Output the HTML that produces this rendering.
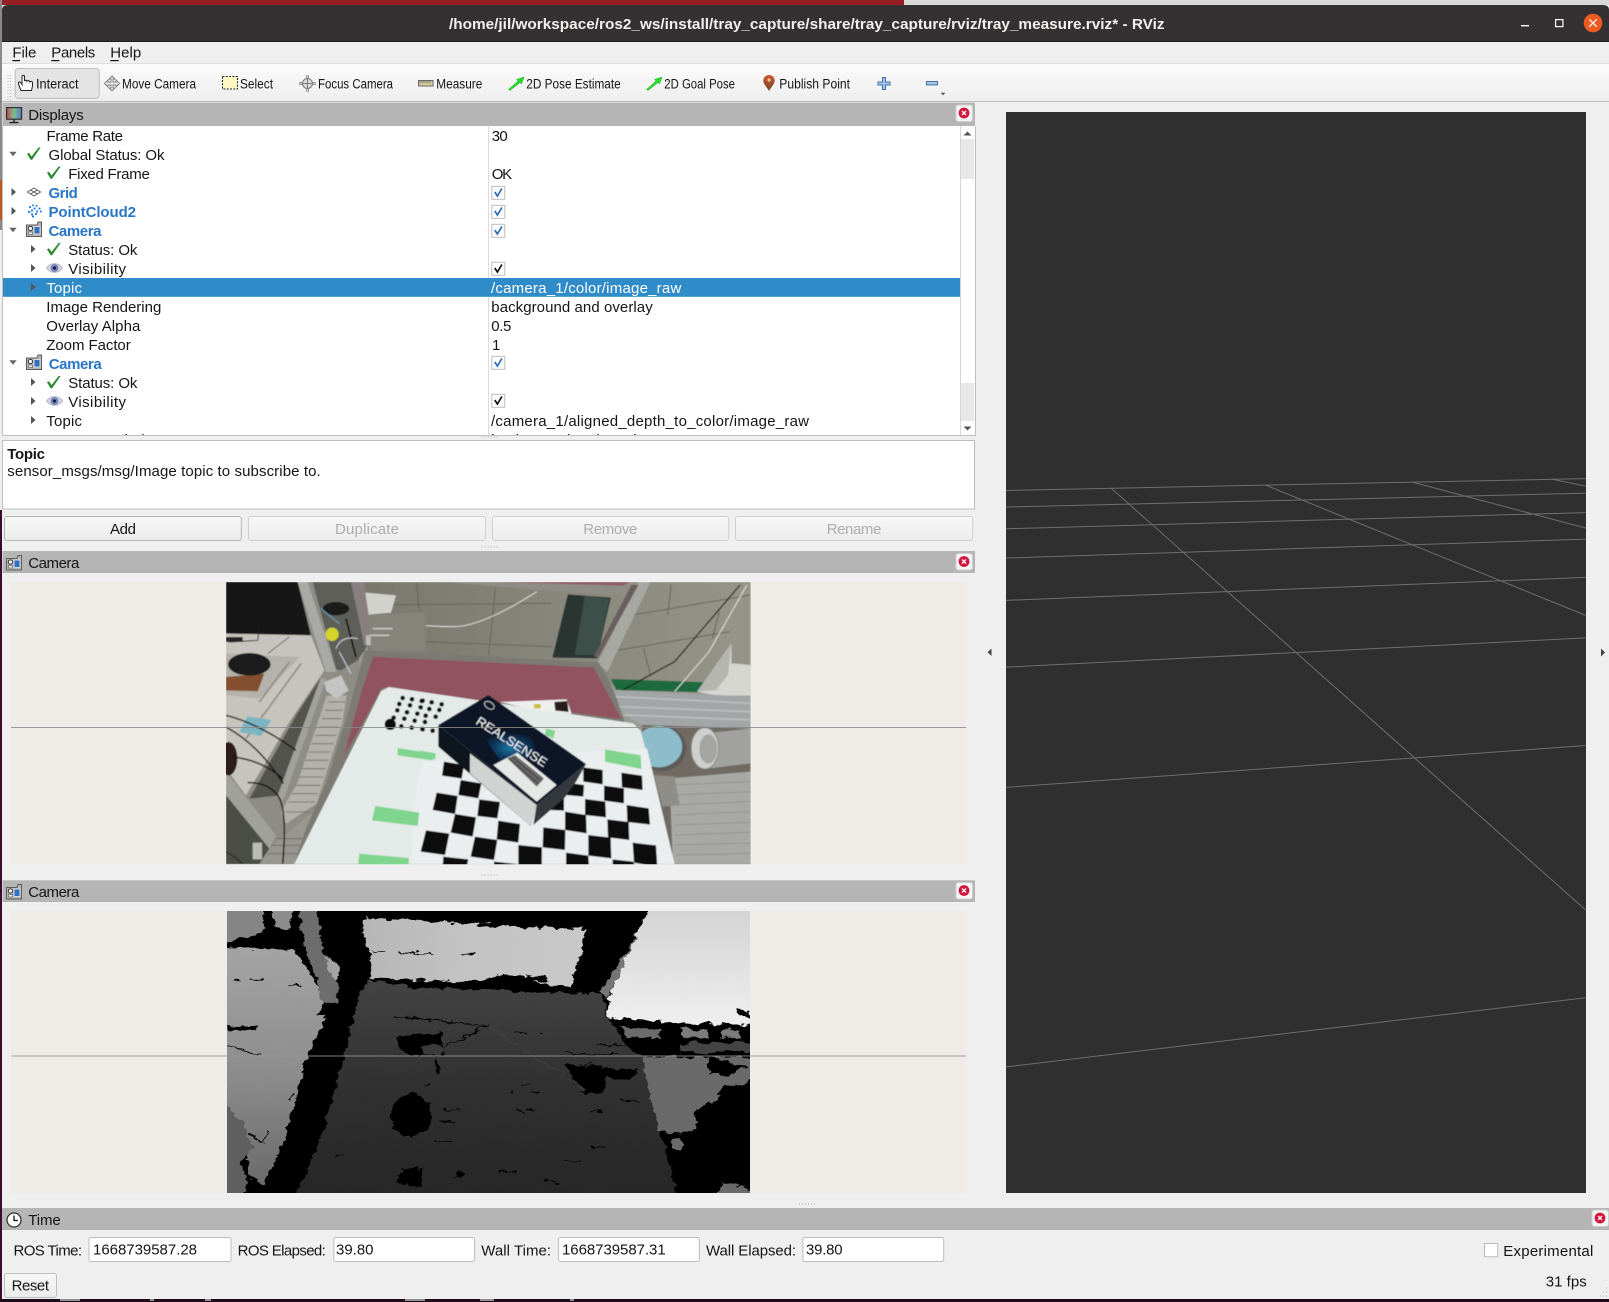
<!DOCTYPE html>
<html lang="en"><head><meta charset="utf-8"><title>RViz</title>
<style>
html,body{margin:0;padding:0;background:#efefef;width:1609px;height:1302px;overflow:hidden}
svg{display:block}
text{font-family:"Liberation Sans",sans-serif;font-size:15px;fill:#151515;white-space:pre}
.tb{font-size:13.5px}
.b{font-weight:bold;fill:#2a76c6}
.w{fill:#fff}
.d{fill:#adadad}
</style></head><body>
<svg xmlns="http://www.w3.org/2000/svg" width="1609" height="1302" viewBox="0 0 1609 1302">
<defs>
<linearGradient id="tbg" x1="0" y1="0" x2="0" y2="1"><stop offset="0" stop-color="#fbfbfb"/><stop offset="1" stop-color="#eeeeee"/></linearGradient>
<linearGradient id="btn" x1="0" y1="0" x2="0" y2="1"><stop offset="0" stop-color="#f8f8f8"/><stop offset="1" stop-color="#ebebeb"/></linearGradient>
<linearGradient id="mon" x1="0" y1="0" x2="1" y2="0"><stop offset="0" stop-color="#c24a5a"/><stop offset=".5" stop-color="#7cc08a"/><stop offset="1" stop-color="#5a78c8"/></linearGradient>
<linearGradient id="pin" x1="0" y1="0" x2="0" y2="1"><stop offset="0" stop-color="#d0562a"/><stop offset="1" stop-color="#6e4a2a"/></linearGradient>
<linearGradient id="dk" x1="0" y1="0" x2="0" y2="1"><stop offset="0" stop-color="#434343"/><stop offset=".5" stop-color="#303030"/><stop offset="1" stop-color="#262626"/></linearGradient>
<linearGradient id="lg" x1="0" y1="0" x2="0" y2="1"><stop offset="0" stop-color="#a4a4a4"/><stop offset=".5" stop-color="#8e8e8e"/><stop offset="1" stop-color="#6a6a6a"/></linearGradient>
<linearGradient id="tp" x1="0" y1="0" x2="1" y2="0"><stop offset="0" stop-color="#b6b6b6"/><stop offset=".5" stop-color="#c4c4c4"/><stop offset="1" stop-color="#c8c8c8"/></linearGradient>
<linearGradient id="br" x1="0" y1="0" x2="0" y2="1"><stop offset="0" stop-color="#d2d2d2"/><stop offset="1" stop-color="#efefef"/></linearGradient>
<linearGradient id="wall" x1="0" y1="0" x2="1" y2="0"><stop offset="0" stop-color="#79786d"/><stop offset="1" stop-color="#96958a"/></linearGradient>
<radialGradient id="bx" cx=".5" cy=".5" r=".5"><stop offset="0" stop-color="#1a76a6"/><stop offset=".5" stop-color="#103f63"/><stop offset="1" stop-color="#0d1628"/></radialGradient>
<clipPath id="c1"><rect x="226" y="582" width="524.6" height="282.3"/></clipPath>
<clipPath id="c2"><rect x="227" y="911" width="523" height="282"/></clipPath>
<clipPath id="tree"><rect x="3" y="126" width="957" height="309"/></clipPath>
<clipPath id="vw"><rect x="1006" y="112" width="580" height="1081"/></clipPath>
<filter id="soft" x="0" y="0" width="1" height="1"><feGaussianBlur stdDeviation=".55"/></filter>
<filter id="jag" filterUnits="userSpaceOnUse" x="190" y="880" width="600" height="340" color-interpolation-filters="sRGB"><feTurbulence type="fractalNoise" baseFrequency=".09 .16" numOctaves="3" seed="4" result="n"/><feDisplacementMap in="SourceGraphic" in2="n" scale="9" xChannelSelector="R" yChannelSelector="G"/></filter>
<g id="x"><rect x="-8" y="-8" width="16.5" height="16.5" rx="2.5" fill="#f5f5f5" stroke="#cfcfcf"/><circle r="5.4" fill="#d2163c"/><path d="M-2 -2L2 2M2 -2L-2 2" stroke="#fff" stroke-width="1.3"/></g>
<g id="cam"><path d="M.5 3.5H11L12 .5H15.5V15H.5Z" fill="#b5b5b2" stroke="#5c5c5a"/><rect x="8" y="5" width="6" height="7.5" fill="#2f6fc4" stroke="#d8d8d8"/><circle cx="4.4" cy="7" r="2.1" fill="#fff" stroke="#333"/><rect x="2.5" y="10.5" width="4" height="2.5" fill="#eee" stroke="#555" stroke-width=".6"/></g>
<g id="chk"><path d="M0 6.2L2 5.2L4.6 9L11.6 0L13.6 0L5.1 12.2L3.6 12.2Z" fill="#2a8a2e"/></g>
<g id="eye"><path d="M0 5C4 -.8 12 -.8 16 5C12 10.8 4 10.8 0 5Z" fill="#d6d6e2" stroke="#a9a9b8" stroke-width=".7"/><circle cx="8" cy="5" r="3.9" fill="#6f7fb8"/><circle cx="8" cy="5" r="1.5" fill="#10143a"/></g>
<path id="ar" d="M0 -4L4.5 0L0 4Z" fill="#555"/>
<path id="ad" d="M-3.7 -2.2H3.7L0 2.2Z" fill="#666"/>
</defs>

<rect width="1609" height="1302" fill="#efefef"/>
<!-- desktop behind -->
<rect x="0" y="0" width="904" height="5" fill="#951f25"/>
<rect x="904" y="0" width="705" height="5" fill="#d8d8d8"/>
<rect x="0" y="0" width="2" height="230" fill="#8a8a8a"/>
<rect x="0" y="180" width="2" height="40" fill="#bd5a20"/>
<rect x="0" y="510" width="2" height="792" fill="#3c0c2c"/>
<rect x="0" y="1299" width="1609" height="3" fill="#1e0a1a"/>
<path d="M60 1300h20M150 1300h4M205 1300h6M405 1300h20M480 1300h14M570 1300h4" stroke="#bbb" stroke-width="1.6"/>
<!-- titlebar -->
<path d="M2 42V10Q2 5 8 5H1603Q1609 5 1609 10V42Z" fill="#333131"/>
<rect x="2" y="41" width="1607" height="1" fill="#1a1a1a"/>
<text x="449" y="29" textLength="715.5" lengthAdjust="spacingAndGlyphs" font-weight="bold" style="fill:#f2f0ee">/home/jil/workspace/ros2_ws/install/tray_capture/share/tray_capture/rviz/tray_measure.rviz* - RViz</text>
<rect x="1521" y="25" width="8" height="1.4" fill="#fff"/>
<rect x="1555.6" y="19.6" width="7.3" height="7" fill="none" stroke="#fff" stroke-width="1.2"/>
<circle cx="1593" cy="23" r="9.3" fill="#ee5a22"/>
<path d="M1589.3 19.3L1596.7 26.7M1596.7 19.3L1589.3 26.7" stroke="#fff" stroke-width="1.3"/>
<!-- menu -->
<rect x="2" y="42" width="1607" height="21.5" fill="#efefef"/>
<rect x="2" y="63.3" width="1607" height="1" fill="#d6d6d6"/>
<text x="12.4" y="57.3" textLength="24">File</text><rect x="12.4" y="60" width="7.6" height="1.2" fill="#111"/>
<text x="51.3" y="57.3" textLength="44">Panels</text><rect x="51.3" y="60" width="8" height="1.2" fill="#111"/>
<text x="110.2" y="57.3" textLength="31">Help</text><rect x="110.2" y="60" width="8.6" height="1.2" fill="#111"/>
<!-- toolbar -->
<rect x="2" y="64" width="1607" height="37" fill="url(#tbg)"/>
<rect x="2" y="101" width="1607" height="1" fill="#bdbdbd"/>
<path d="M8 76v25M10.5 76v25" stroke="#bbb" stroke-dasharray="1 2" stroke-width="1" transform="translate(0,-1)"/>
<rect x="15.2" y="68.4" width="84" height="30" rx="3" fill="#e4e4e4" stroke="#bdbdbd"/>
<path d="M21 90.5C20 88 18.5 85 18.5 83C18.5 81.5 20 81.5 21 83L22 84.5V76.5C22 75 24.5 75 24.5 76.5V81C25 80 27 80 27 81.2C27.5 80.4 29.5 80.4 29.5 81.8C30.3 81 32.5 81.2 32.5 82.8V86L31.5 90.5Z" fill="#fff" stroke="#222" stroke-width="1"/>
<text class="tb" x="36" y="88.3" textLength="42.5" lengthAdjust="spacingAndGlyphs">Interact</text>
<path d="M112 76l3 3h-2v3h3v-2l3.5 3.5-3.5 3.5v-2h-3v3h2l-3 3-3-3h2v-3h-3v2l-3.5-3.5 3.5-3.5v2h3v-3h-2z" fill="#e9e9e9" stroke="#7b7b7b" stroke-width=".9"/>
<text class="tb" x="122" y="88.3" textLength="74" lengthAdjust="spacingAndGlyphs">Move Camera</text>
<rect x="222.5" y="76.5" width="15" height="12.5" fill="#fdf8c2" stroke="#222" stroke-dasharray="2 1.3"/>
<text class="tb" x="240" y="88.3" textLength="33" lengthAdjust="spacingAndGlyphs">Select</text>
<g fill="none" stroke="#7b7b7b" stroke-width="1"><path d="M307.5 75v17M299 83.5h17" stroke-width="2.4"/><path d="M307.5 75v17M299 83.5h17" stroke="#e2e2e2" stroke-width=".8"/><circle cx="307.5" cy="83.5" r="5" fill="#ddd"/><path d="M307.5 79v9M303 83.5h9" /></g>
<text class="tb" x="318" y="88.3" textLength="75" lengthAdjust="spacingAndGlyphs">Focus Camera</text>
<rect x="418.5" y="80.5" width="14.5" height="5.5" fill="#d8cfa0" stroke="#666"/><path d="M420 81v2.2M422 81v2.2M424 81v2.2M426 81v2.2M428 81v2.2M430 81v2.2" stroke="#555" stroke-width=".7"/>
<text class="tb" x="436.3" y="88.3" textLength="46" lengthAdjust="spacingAndGlyphs">Measure</text>
<path d="M508.5 89.5L518 81L516.5 79.5L524 77L521.5 84L520 82.5L510 90.5Z" fill="#22e022" stroke="#148a14" stroke-width=".4"/>
<text class="tb" x="526.3" y="88.3" textLength="94.4" lengthAdjust="spacingAndGlyphs">2D Pose Estimate</text>
<path d="M646.5 89.5L656 81L654.5 79.5L662 77L659.5 84L658 82.5L648 90.5Z" fill="#22e022" stroke="#148a14" stroke-width=".4"/>
<text class="tb" x="664.3" y="88.3" textLength="70.7" lengthAdjust="spacingAndGlyphs">2D Goal Pose</text>
<path d="M769 75a5.7 5.7 0 0 1 5.7 5.7c0 3.5-3.7 6.5-5.7 10.3c-2-3.8-5.7-6.8-5.7-10.3A5.7 5.7 0 0 1 769 75z" fill="url(#pin)"/><circle cx="769" cy="80" r="1.6" fill="#f0c8a8"/>
<text class="tb" x="779.3" y="88.3" textLength="70.7" lengthAdjust="spacingAndGlyphs">Publish Point</text>
<path d="M882.5 77.5h3v4.5h4.5v3h-4.5v4.5h-3v-4.5h-4.5v-3h4.5z" fill="#a9c3e6" stroke="#3f72ae" stroke-width="1"/>
<rect x="926.5" y="81.5" width="11" height="3.4" fill="#a9c3e6" stroke="#3f72ae" stroke-width="1"/>
<path d="M940.7 92.8h4.6L943 95.4z" fill="#555"/>

<!-- Displays header -->
<rect x="2.5" y="102.6" width="972.5" height="23.4" fill="#b5b5b5"/>
<rect x="6.6" y="107.6" width="15" height="11.6" fill="url(#mon)" stroke="#2a2a2a" stroke-width="1.1"/><path d="M14 119v3M9.5 122.6h9" stroke="#222" stroke-width="1.4"/>
<text x="28.2" y="120" textLength="55.5">Displays</text>
<use href="#x" x="964" y="113"/>
<!-- tree -->
<rect x="3" y="126" width="957" height="309" fill="#fff"/>
<rect x="960" y="126" width="15" height="309" fill="#fff"/>
<rect x="960.5" y="139" width="14" height="40" fill="#e8e8e8"/>
<rect x="960.5" y="383" width="14" height="38" fill="#e8e8e8"/>
<rect x="960" y="126" width="1" height="309" fill="#d5d5d5"/>
<path d="M967.5 131.5L971.5 135.5H963.5Z" fill="#555"/><path d="M963.5 426.5H971.5L967.5 430.5Z" fill="#555"/>
<rect x="2" y="126" width="1" height="310" fill="#bfbfbf"/>
<rect x="2" y="435" width="973" height="1" fill="#bfbfbf"/>
<rect x="975" y="126" width="1" height="310" fill="#bfbfbf"/>
<rect x="488" y="126" width="1" height="309" fill="#dcdcdc"/>
<rect x="3" y="278" width="957" height="18.8" fill="#2f8cc8"/>
<g clip-path="url(#tree)"><g transform="translate(0,-.5)">
<text x="46.5" y="141.3" textLength="76.5">Frame Rate</text>
<text x="491.7" y="141.3" textLength="16">30</text>
<use href="#ad" x="13" y="154.5"/><use href="#chk" x="27" y="148"/>
<text x="48.5" y="160.3" textLength="116">Global Status: Ok</text>
<use href="#chk" x="47" y="167"/>
<text x="68.2" y="179.3" textLength="81.6">Fixed Frame</text>
<text x="491.7" y="179.3" textLength="20.5">OK</text>
<use href="#ar" x="11.5" y="192.5"/>
<path d="M27.5 192.5L34 188.5L40.5 192.5L34 196.5Z M30.5 190.5L37.5 194.5M37.5 190.5L30.5 194.5" fill="none" stroke="#555" stroke-width=".9"/>
<text class="b" x="48.5" y="198.3" textLength="29.3">Grid</text>
<use href="#ar" x="11.5" y="211.5"/>
<path d="M33 205v1.8M36.5 205.5v1.8M29 207.5h2M33.5 209h2M38.5 209h2M31 211h2M28 212.5h2.4M36 212h2M40 212h1.8M31 215h2M35 214.5h2M32 217h2" stroke="#1e7fe0" stroke-width="1.7"/>
<text class="b" x="48.5" y="217.3" textLength="87.5">PointCloud2</text>
<use href="#ad" x="13" y="230.5"/><use href="#cam" x="26" y="222"/>
<text class="b" x="48.5" y="236.3" textLength="53">Camera</text>
<use href="#ar" x="31" y="249.5"/><use href="#chk" x="47" y="243.5"/>
<text x="68.2" y="255.3" textLength="69.2">Status: Ok</text>
<use href="#ar" x="31" y="268.5"/><use href="#eye" x="46.5" y="263.5"/>
<text x="68.2" y="274.3" textLength="57.8">Visibility</text>
<use href="#ar" x="31" y="287.5"/>
<text class="w" x="46.4" y="293.3" textLength="35.6">Topic</text>
<text class="w" x="491" y="293.3" textLength="190.3">/camera_1/color/image_raw</text>
<text x="46.3" y="312.3" textLength="115">Image Rendering</text>
<text x="491.3" y="312.3" textLength="161.4">background and overlay</text>
<text x="46.3" y="331.3" textLength="94">Overlay Alpha</text>
<text x="491.3" y="331.3" textLength="20">0.5</text>
<text x="46.3" y="350.3" textLength="84.4">Zoom Factor</text>
<text x="492" y="350.3" textLength="6.5">1</text>
<use href="#ad" x="13" y="363"/><use href="#cam" x="26" y="355"/>
<text class="b" x="48.7" y="369.3" textLength="53">Camera</text>
<use href="#ar" x="31" y="382.5"/><use href="#chk" x="47" y="376.5"/>
<text x="68.2" y="388.3" textLength="69.2">Status: Ok</text>
<use href="#ar" x="31" y="401.5"/><use href="#eye" x="46.5" y="396.5"/>
<text x="68.2" y="407.3" textLength="57.8">Visibility</text>
<use href="#ar" x="31" y="420.5"/>
<text x="46.3" y="426.3" textLength="35.7">Topic</text>
<text x="491" y="426.3" textLength="318">/camera_1/aligned_depth_to_color/image_raw</text>
<text x="46.3" y="445.3" textLength="115">Image Rendering</text>
<text x="491.3" y="445.3" textLength="161.4">background and overlay</text>
<!-- check boxes -->
<g fill="#fff" stroke="#bcbcbc"><rect x="491.8" y="186.8" width="13" height="13"/><rect x="491.8" y="205.8" width="13" height="13"/><rect x="491.8" y="224.8" width="13" height="13"/><rect x="491.8" y="262.8" width="13" height="13"/><rect x="491.8" y="356.8" width="13" height="13"/><rect x="491.8" y="394.8" width="13" height="13"/></g>
<g fill="none" stroke="#2a6db5" stroke-width="1.7"><path d="M494.8 192.5l2.6 4 4.5-7.5M494.8 211.5l2.6 4 4.5-7.5M494.8 230.5l2.6 4 4.5-7.5M494.8 362.5l2.6 4 4.5-7.5"/></g>
<g fill="none" stroke="#111" stroke-width="1.7"><path d="M494.8 268.5l2.6 4 4.5-7.5M494.8 400.5l2.6 4 4.5-7.5"/></g>
</g></g>
<path d="M481.7 437h17" stroke="#aaa" stroke-dasharray="1 2"/>
<!-- description -->
<rect x="2.5" y="440.5" width="972" height="68.5" fill="#fff" stroke="#bdbdbd"/>
<text x="7.3" y="459" textLength="37.7" font-weight="bold">Topic</text>
<text x="7.3" y="476" textLength="313.4">sensor_msgs/msg/Image topic to subscribe to.</text>
<!-- buttons -->
<g fill="url(#btn)" stroke="#bdbdbd">
<rect x="4.5" y="516.5" width="236.8" height="24" rx="2.5" stroke="#b4b4b4"/>
<rect x="248.5" y="516.5" width="237" height="24" rx="2.5" stroke="#cfcfcf"/>
<rect x="492.5" y="516.5" width="236.2" height="24" rx="2.5" stroke="#cfcfcf"/>
<rect x="735.5" y="516.5" width="237.2" height="24" rx="2.5" stroke="#cfcfcf"/></g>
<text x="110" y="534" textLength="26">Add</text>
<text class="d" x="335" y="534" textLength="64">Duplicate</text>
<text class="d" x="583.3" y="534" textLength="54">Remove</text>
<text class="d" x="826.7" y="534" textLength="54.6">Rename</text>
<path d="M481.7 547h17" stroke="#aaa" stroke-dasharray="1 2"/>
<!-- Camera 1 -->
<rect x="2.5" y="551" width="972.5" height="22" fill="#b5b5b5"/>
<use href="#cam" x="6" y="555"/>
<text x="28.3" y="568" textLength="51">Camera</text>
<use href="#x" x="964" y="561.5"/>
<rect x="11" y="582" width="955" height="282.3" fill="#efece8"/>

<g clip-path="url(#c1)"><g filter="url(#soft)">
<rect x="226" y="582" width="525" height="283" fill="#9b9a92"/>
<!-- scene right/back, zoom6 coordinates -->
<g transform="translate(220,575) scale(.3444,.3333)">
<polygon points="400,21 1541,21 1541,340 1130,330 1000,260 430,225" fill="url(#wall)"/>
<path d="M570 21L590 225M800 40L780 240M430 90L960 85M590 200L965 215M1140 130L1541 60M1130 230L1480 170M1310 30L1300 120M1450 110L1430 190M1230 220L1250 300" stroke="#66655b" stroke-width="3" fill="none"/>
<polygon points="660,21 1240,21 1205,65 920,45" fill="#8e8c85"/>
<polygon points="800,21 1190,21 1170,32" fill="#8d5a68"/>
<polygon points="1010,58 1135,68 1095,250 965,248" fill="#2b3531"/>
<polygon points="1060,62 1130,72 1098,240 1030,240" fill="#3d5048"/>
<polygon points="1215,21 1250,21 1125,290 1095,265" fill="#a8a8a3"/>
<polygon points="1195,30 1215,30 1100,245 1085,245" fill="#6a5e60"/>
<path d="M510 142Q600 155 680 155T920 50" stroke="#d8d8d4" stroke-width="3" fill="none"/>
<polygon points="1135,312 1420,322 1395,352 1150,345" fill="#1e6a3c"/>
<path d="M1170 345L1320 260L1510 30" stroke="#111" stroke-width="3.5" fill="none"/>
<path d="M1320 350L1420 230L1530 30" stroke="#ddd" stroke-width="3" fill="none"/>
<polygon points="1385,350 1485,205 1485,265 1541,270 1541,362 1440,362" fill="#d6d6d1"/>
<polygon points="1385,350 1485,205 1475,300 1440,345" fill="#b6b6b0"/>
<polygon points="1145,345 1541,365 1541,460 1225,450 1170,420" fill="#a3a6a6"/>
<path d="M1150 365L1541 385M1160 395L1541 410M1175 420L1541 435" stroke="#bcbebe" stroke-width="5" fill="none"/>
<polygon points="1225,450 1541,460 1541,868 1290,868 1230,560" fill="#6f6a63"/>
<polygon points="1305,610 1541,590 1541,868 1315,868" fill="#a8a8a4"/>
<path d="M1310 630L1541 620M1312 660L1541 650M1314 690L1541 680M1316 720L1541 710M1318 750L1541 742M1320 780L1541 772M1322 810L1541 804M1324 840L1541 836" stroke="#949490" stroke-width="3" fill="none"/>
<polygon points="1260,600 1320,605 1335,690 1285,695" fill="#8f8d87"/>
<ellipse cx="1282" cy="520" rx="72" ry="68" fill="#5d5a55"/>
<ellipse cx="1274" cy="515" rx="68" ry="62" fill="#8dbccb"/>
<polygon points="1385,478 1541,460 1541,565 1405,582" fill="#a2a29e"/>
<ellipse cx="1408" cy="520" rx="40" ry="62" fill="#cfcfcd" stroke="#8a8a86" stroke-width="3"/>
<ellipse cx="1418" cy="522" rx="26" ry="44" fill="#a4a4a2"/>
</g>
<!-- scene left, zoom12 coordinates -->
<g transform="translate(226,582) scale(.33333)">
<rect width="400" height="846" fill="#8e8d85"/>
<polygon points="0,0 215,0 255,160 0,155" fill="#141414"/>
<polygon points="0,155 255,160 295,265 190,420 60,640 0,560" fill="#c6c4bc"/>
<polygon points="0,215 222,225 100,350 0,340" fill="#b4b2aa"/>
<path d="M190 240L100 360M225 245L60 470" stroke="#8e8c84" stroke-width="5" fill="none"/>
<polygon points="0,285 115,275 95,328 0,325" fill="#84502f"/>
<ellipse cx="70" cy="247" rx="64" ry="34" fill="#1b1b1b"/>
<path d="M100 140L95 175L10 180" stroke="#222" stroke-width="3" fill="none"/><path d="M0 165H50V180H0Z" fill="#222"/>
<path d="M125 215L190 165" stroke="#222" stroke-width="2" fill="none"/>
<polygon points="260,0 375,0 425,190 395,235 345,265 330,262" fill="#5f5f5a"/>
<polygon points="215,0 245,0 332,270 300,270" fill="#a9a9a5"/>
<polygon points="375,0 415,0 437,170 415,190" fill="#8a7f80"/>
<ellipse cx="330" cy="80" rx="40" ry="20" fill="#1c1c1c"/>
<path d="M360 110L390 225" stroke="#111" stroke-width="5" fill="none"/>
<path d="M285 80L340 125M430 100L510 110L590 205M490 120L530 190" stroke="#6ca3bd" stroke-width="3" fill="none"/>
<path d="M330 200Q345 160 395 170M340 210L375 275" stroke="#ccd" stroke-width="3" fill="none"/>
<polygon points="418,32 510,40 495,92 428,98" fill="#d2d2cc"/>
<polygon points="430,98 600,90 600,210 435,205" fill="#85847a"/>
<path d="M440 140H500M430 160H490" stroke="#ccc" stroke-width="4"/>
<circle cx="318" cy="157" r="20" fill="#d4d42a"/>
<rect x="420" y="160" width="14" height="30" fill="#bbb"/>
<polygon points="285,285 165,640 70,650 210,400" fill="#53544e"/>
<polygon points="300,292 172,655 155,640 285,285" fill="#a2a29c"/>
<polygon points="302,342 362,340 350,420 272,665 180,725 165,690 215,600" fill="#b2b1aa"/>
<path d="M305 360H358M297 385H350M288 410H345M278 435H338M268 460H330M258 485H322M248 510H315M238 535H307M228 560H300M218 585H292M208 610H284M198 635H276M188 660H268M178 690H250" stroke="#6c6c66" stroke-width="2.5" fill="none"/>
<polygon points="295,300 345,280 368,325 330,350 300,325" fill="#c4c4c2"/>
<polygon points="0,570 150,760 130,800 0,640" fill="#a1a19b"/>
<polygon points="0,640 130,800 100,846 0,846" fill="#4c4d47"/>
<polygon points="130,800 260,690 210,846 100,846" fill="#97978f"/>
<path d="M150 770H255M135 790H240M125 815H225" stroke="#707070" stroke-width="3" fill="none"/>
<polygon points="65,403 136,414 105,462 40,450" fill="#7cb4c2"/>
<ellipse cx="8" cy="530" rx="26" ry="50" fill="#2a1a18"/>
<path d="M0 400Q100 425 210 505M0 435Q100 490 172 605M20 525Q110 535 170 590M65 602Q125 600 155 640T170 846" stroke="#1d1518" stroke-width="4.5" fill="none"/>
<path d="M0 810Q30 825 50 846" stroke="#222" stroke-width="3" fill="none"/>
<rect x="80" y="782" width="28" height="50" fill="#bcbcb7"/>
</g>
<!-- tray & sheet, zoom6 coords -->
<g transform="translate(220,575) scale(.3444,.3333)">
<polygon points="420,225 1100,262 1140,340 1300,800 1320,868 215,868 250,760 310,620 370,420" fill="#7b7a72"/>
<polygon points="445,245 1085,278 1165,432 470,338 395,480 360,540 412,345" fill="#91525f"/>
<polygon points="468,348 490,336 1200,445 1222,468 1320,868 215,868" fill="#e3eae8"/>
<polygon points="590,560 1240,520 1320,868 555,868 560,690" fill="#eaeeef"/>
</g>
<!-- tapes and dots -->
<g transform="translate(226,582) scale(.33333)">
<g fill="#7fd48e"><polygon points="515,498 625,515 620,535 515,520"/><polygon points="448,672 580,692 575,732 438,715"/><polygon points="400,815 548,828 548,860 395,860"/></g>
<g fill="#111">
<circle cx="493" cy="427" r="17"/>
<circle cx="530" cy="348" r="7"/><circle cx="558" cy="352" r="7"/><circle cx="590" cy="356" r="7"/>
<circle cx="520" cy="366" r="7"/><circle cx="552" cy="370" r="7"/><circle cx="584" cy="376" r="7"/>
<circle cx="514" cy="385" r="7"/><circle cx="543" cy="391" r="7"/><circle cx="574" cy="395" r="7"/>
<circle cx="503" cy="407" r="7"/><circle cx="535" cy="410" r="7"/><circle cx="566" cy="416" r="7"/><circle cx="597" cy="420" r="7"/>
<circle cx="526" cy="433" r="7"/><circle cx="557" cy="437" r="7"/><circle cx="589" cy="441" r="7"/>
</g></g>
<!-- checker and box, zoom11 coords -->
<g transform="translate(420,690) scale(.33333)">
<g fill="#111">
<circle cx="5" cy="33" r="7"/><circle cx="35" cy="37" r="7"/><circle cx="65" cy="43" r="7"/><circle cx="28" cy="57" r="7"/><circle cx="58" cy="60" r="7"/><circle cx="17" cy="77" r="7"/><circle cx="47" cy="80" r="7"/><circle cx="8" cy="118" r="7"/><circle cx="38" cy="122" r="7"/>
<polygon points="72,215 132,225 125,266 66,257"/>
<polygon points="122,270 184,280 175,325 115,315"/><polygon points="490,232 548,240 548,283 490,275"/><polygon points="604,248 666,257 668,300 606,292"/>
<polygon points="50,308 113,318 105,372 38,360"/><polygon points="178,328 240,336 232,385 172,378"/><polygon points="440,278 492,285 490,320 437,315"/><polygon points="552,287 612,295 612,340 552,332"/>
<polygon points="105,372 168,382 158,440 92,428"/><polygon points="235,392 300,402 295,458 230,448"/><polygon points="375,355 432,318 432,362 390,360"/><polygon points="495,327 556,335 558,382 495,375"/><polygon points="620,345 686,355 690,404 622,396"/>
<polygon points="18,421 88,431 75,495 2,485"/><polygon points="165,440 232,450 222,510 152,500"/><polygon points="370,412 436,420 435,480 368,472"/><polygon points="435,365 498,375 500,430 435,420"/><polygon points="562,388 626,396 628,450 564,442"/>
<polygon points="295,465 366,472 365,530 295,530"/><polygon points="505,435 572,443 574,505 505,497"/><polygon points="638,458 708,466 712,530 642,518"/>
<polygon points="70,500 145,508 140,530 68,530"/><polygon points="438,488 505,497 507,530 438,530"/><polygon points="578,508 640,515 645,530 578,530"/><polygon points="222,515 290,522 290,530 222,530"/>
</g>
<polygon points="555,178 662,196 664,237 555,215" fill="#7fd48e"/>
<polygon points="0,182 47,190 45,208 0,200" fill="#7fd48e"/>
<polygon points="378,116 405,122 400,145 375,135" fill="#7fd48e"/>
<polygon points="240,36 440,28 455,72 340,58" fill="#eef0ee"/>
<polygon points="403,36 442,33 446,66 406,62" fill="#2a1c1e"/>
<polygon points="342,42 362,42 362,55 342,55" fill="#cdbb40"/>
<!-- box -->
<polygon points="350,345 498,222 470,272 435,322 340,405" fill="#33373b"/>
<polygon points="55,105 350,345 332,408 55,170" fill="#10151c"/>
<polygon points="150,190 350,345 332,408 150,250" fill="#cfd3d2"/>
<polygon points="55,105 205,15 498,222 350,345" fill="#0d1526"/>
<polygon points="180,125 330,135 360,215 250,225" fill="url(#bx)"/>
<polygon points="220,225 292,188 410,285 350,335" fill="#e6e8e6"/>
<polygon points="262,205 285,195 372,265 350,290" fill="#6a6a6a"/>
<path d="M268 205L356 282M276 200L364 274" stroke="#222" stroke-width="4" stroke-dasharray="3 2" fill="none"/>
<ellipse cx="208" cy="46" rx="16" ry="10" fill="none" stroke="#ccc" stroke-width="2.5" transform="rotate(32 208 46)"/>
<text x="165" y="100" textLength="245" lengthAdjust="spacingAndGlyphs" transform="rotate(32.7 165 100)" style="font-size:38px;fill:#f2f4f6">REALSENSE</text>
</g>
</g></g>
<rect x="11" y="727" width="955" height="1" fill="#8a8a8a" opacity=".85"/>

<!-- Camera 2 -->
<rect x="2.5" y="880.3" width="972.5" height="21.7" fill="#b5b5b5"/>
<use href="#cam" x="6" y="884"/>
<text x="28.3" y="897" textLength="51">Camera</text>
<use href="#x" x="964" y="890.5"/>
<path d="M481.7 875h17" stroke="#aaa" stroke-dasharray="1 2"/>
<rect x="11" y="911" width="955" height="282" fill="#efece8"/>
<g clip-path="url(#c2)">
<rect x="227" y="911" width="523" height="282" fill="#000"/>
<g filter="url(#jag)">
<rect x="200" y="890" width="580" height="320" fill="#000"/>
<g transform="translate(220,900) scale(.3444,.3333)">
<polygon points="0,140 215,150 290,270 310,340 250,480 180,740 120,860 85,820 70,700 0,590" fill="url(#lg)"/>
<polygon points="0,20 130,20 125,95 40,125 0,120" fill="#858585"/>
<polygon points="150,25 210,25 205,85 155,80" fill="#8d8d8d"/>
<polygon points="230,20 280,20 300,150 345,210 340,310 292,300 280,230 240,130" fill="#6d6d6d"/>
<polygon points="305,170 340,190 345,235 322,225" fill="#a5a5a5"/>
<polygon points="0,600 70,670 95,745 60,790 85,850 60,890 0,890" fill="#5f5f5f"/>
<polygon points="415,55 1062,90 1020,258 950,255 810,225 730,245 560,240 440,235 435,175 420,120" fill="url(#tp)"/>
<polygon points="1250,15 1580,15 1580,375 1400,372 1130,355 1125,305 1180,170" fill="url(#br)"/>
<polygon points="1215,90 1180,170 1125,300 1105,270 1165,180" fill="#757575"/>
<polygon points="430,238 550,262 1110,282 1130,360 1190,450 1225,470 1330,900 215,900 305,680 360,470 400,300" fill="url(#dk)"/>
<polygon points="1225,470 1420,470 1580,475 1530,552 1460,560 1440,600 1380,630 1380,695 1275,695" fill="#6a6a6a"/>
<polygon points="1160,375 1280,390 1280,415 1185,410" fill="#6b6b6b"/>
<polygon points="1340,388 1418,392 1418,415 1340,415" fill="#7c7c7c"/>
<polygon points="1455,392 1510,392 1510,412 1455,412" fill="#7c7c7c"/>
<polygon points="1330,430 1580,425 1580,455 1340,458" fill="#444"/>
<circle cx="1328" cy="733" r="18" fill="#6a6a6a"/>
<polygon points="1430,900 1465,845 1525,862 1580,900" fill="#6a6a6a"/>
<g fill="#000">
<polygon points="20,380 110,382 105,390 20,392"/>
<polygon points="510,410 640,395 650,465 540,465 520,440"/>
<polygon points="625,470 645,510 632,522"/>
<polygon points="1000,495 1220,510 1190,540 1120,530 1115,580 1060,580"/>
<ellipse cx="555" cy="645" rx="58" ry="66"/>
<polygon points="525,805 590,805 585,860 515,850"/>
<polygon points="690,815 710,812 705,835 685,832"/>
<polygon points="300,310 320,340 285,348"/>
<polygon points="1420,470 1530,500 1470,530 1420,520"/>
<polygon points="1500,335 1535,330 1535,350 1510,352"/>
<polygon points="810,225 945,228 950,245 800,245"/>
</g>
<path d="M20 435L120 465M40 240H60M90 240H130M195 255L235 258M85 700L130 735M140 690L125 730M210 580L200 600M520 158H620M700 160H740M440 158H485M510 350L780 378M650 440L780 375M880 552H900M845 580H855M905 575L930 570M860 625L885 640M890 625L915 630M650 625L695 630M640 665H680M620 722L675 728M810 815H860M940 845L985 850M1080 740H1115M1020 785H1050M1160 598L1215 605M1075 636H1110M590 552H608M1000 780H1020M330 770L360 765M1090 435H1190M1000 460H1160M860 400H890M930 398H940M1040 500L1080 490" stroke="#000" stroke-width="3.5" fill="none"/>
<path d="M780 378L1060 570" stroke="#484848" stroke-width="2" fill="none"/>
<ellipse cx="618" cy="448" rx="30" ry="16" fill="#3a3a3a"/>
</g></g></g>
<rect x="11" y="1055.5" width="955" height="1" fill="#969696" opacity=".85"/>

<!-- 3D view -->
<rect x="1006" y="112" width="580" height="1081" fill="#2f2f2f"/>
<g clip-path="url(#vw)"><g transform="translate(1000,460) scale(.38834,.39541)" stroke="#6e6e6e" fill="none">
<path vector-effect="non-scaling-stroke" d="M15 77L1508 47"/>
<path vector-effect="non-scaling-stroke" d="M15 119L1508 84"/>
<path vector-effect="non-scaling-stroke" d="M15 174L1508 133"/>
<path vector-effect="non-scaling-stroke" d="M15 248L1508 200"/>
<path vector-effect="non-scaling-stroke" d="M15 355L1508 297"/>
<path vector-effect="non-scaling-stroke" d="M15 524L1508 450"/>
<path vector-effect="non-scaling-stroke" d="M15 828L1508 722"/>
<path vector-effect="non-scaling-stroke" d="M15 1535L1508 1360"/>
<path vector-effect="non-scaling-stroke" d="M287 72L1508 1138"/>
<path vector-effect="non-scaling-stroke" d="M685 64L1508 393"/>
<path vector-effect="non-scaling-stroke" d="M1062 56L1508 172"/>
<path vector-effect="non-scaling-stroke" d="M1420 48L1508 66"/>
</g></g>
<path d="M991.5 648.5V656L987.5 652.2Z" fill="#444"/>
<path d="M1601 648.5V656.5L1605 652.5Z" fill="#444"/>
<path d="M799 1204h18" stroke="#aaa" stroke-dasharray="1 2"/>

<!-- Time panel -->
<rect x="2" y="1208" width="1607" height="22" fill="#b5b5b5"/>
<circle cx="14" cy="1220" r="7" fill="#fff" stroke="#333" stroke-width="1.3"/><path d="M14 1215.5V1220.5H18" stroke="#111" stroke-width="1.3" fill="none"/>
<text x="28.3" y="1225" textLength="32.4">Time</text>
<use href="#x" x="1600" y="1218"/>
<g fill="#fff" stroke="#bdbdbd">
<rect x="89" y="1237.5" width="142" height="24" rx="2"/>
<rect x="333.8" y="1237.5" width="140.8" height="24" rx="2"/>
<rect x="558.6" y="1237.5" width="140.8" height="24" rx="2"/>
<rect x="802.9" y="1237.5" width="140.8" height="24" rx="2"/></g>
<text x="13.5" y="1255.7" textLength="68.5">ROS Time:</text>
<text x="93" y="1254.5" textLength="104">1668739587.28</text>
<text x="237.6" y="1255.7" textLength="88.2">ROS Elapsed:</text>
<text x="336" y="1254.5" textLength="37.5">39.80</text>
<text x="481.3" y="1255.7" textLength="69.7">Wall Time:</text>
<text x="562" y="1254.5" textLength="103.7">1668739587.31</text>
<text x="706" y="1255.7" textLength="90">Wall Elapsed:</text>
<text x="806" y="1254.5" textLength="36.6">39.80</text>
<rect x="4.5" y="1273.5" width="52" height="24" rx="2.5" fill="url(#btn)" stroke="#bdbdbd"/>
<text x="11.6" y="1290.7" textLength="37.4">Reset</text>
<rect x="1484.5" y="1243.5" width="13.2" height="13.2" fill="#fff" stroke="#bcbcbc"/>
<text x="1503.3" y="1256" textLength="90">Experimental</text>
<text x="1545.7" y="1286.7" textLength="41">31 fps</text>
<path d="M1600 1296h8M1603 1292h5M1606 1288h2" stroke="#aaa" stroke-dasharray="1 2"/>
</svg>
</body></html>
